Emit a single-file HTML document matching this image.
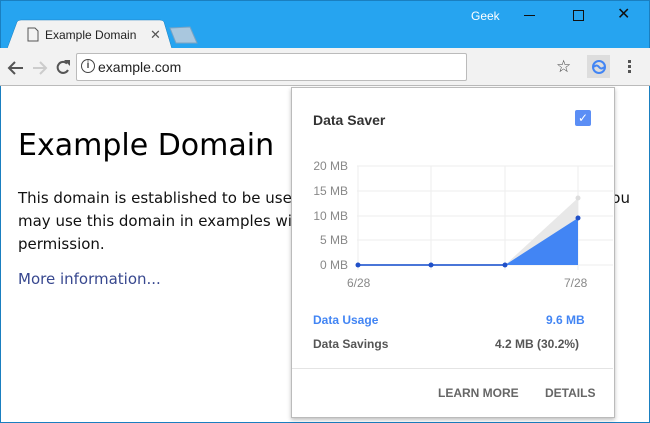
<!DOCTYPE html><html><head><style>
body{margin:0;width:650px;height:423px;overflow:hidden;font-family:"Liberation Sans",sans-serif;background:#26a4f0;position:relative}
.a{position:absolute}
</style></head><body>
<div class="a" style="left:0;top:0;width:648px;height:421px;border:1px solid #1a7fc0"></div>
<div class="a" style="left:471px;top:9px;font-size:12px;color:#fff">Geek</div>
<div class="a" style="left:524px;top:15px;width:11px;height:1px;background:#111"></div>
<div class="a" style="left:573px;top:10px;width:9px;height:9px;border:1px solid #111"></div>
<div class="a" style="left:617px;top:4px;font-size:16px;color:#111">✕</div>
<svg class="a" style="left:0;top:18px" width="200" height="32"><path d="M7 31 L17 4 Q18 2 21 2 L160 2 Q163 2 164 4 L172 31Z" fill="#f2f2f2" stroke="#1a7fc0" stroke-width="0.5"/><path d="M170 10 L190 9 L197 25 L176 25Z" fill="#a9c7de" stroke="#7aa3c3"/><path d="M28 10h7l3 3v10h-10z" fill="none" stroke="#555"/></svg>
<div class="a" style="left:45px;top:28px;font-size:12px;color:#222">Example Domain</div>
<div class="a" style="left:150px;top:27px;font-size:13px;color:#555">✕</div>
<div class="a" style="left:0;top:48px;width:650px;height:37px;background:#f2f2f2;border-bottom:1px solid #bbb"></div>
<svg class="a" style="left:0;top:58px" width="76" height="20"><path d="M23 10H10M15 4L9 10l6 6" stroke="#555" stroke-width="2" fill="none"/><path d="M33 10h12M40 4l6 6-6 6" stroke="#ccc" stroke-width="2" fill="none"/><path d="M67 5.5A5.5 5.5 0 1 0 68 12" stroke="#555" stroke-width="2" fill="none"/><path d="M64 2h6v6z" fill="#555"/></svg>
<div class="a" style="left:76px;top:53px;width:389px;height:26px;background:#fff;border:1px solid #bbb;border-radius:2px"></div>
<div class="a" style="left:81px;top:59px;width:12px;height:12px;border:1.5px solid #444;border-radius:50%;font-size:10px;text-align:center;line-height:12px;font-weight:bold;color:#444">i</div>
<div class="a" style="left:98px;top:59px;font-size:14px;color:#222">example.com</div>
<div class="a" style="left:556px;top:57px;font-size:17px;color:#444">☆</div>
<div class="a" style="left:587px;top:55px;width:23px;height:23px;background:#ddd"></div>
<svg class="a" style="left:591px;top:59px" width="16" height="16"><circle cx="8" cy="8" r="6" fill="none" stroke="#4285f4" stroke-width="2"/><path d="M3 8q2.5-3 5 0t5 0" fill="none" stroke="#4285f4" stroke-width="2"/></svg>
<div class="a" style="left:628px;top:60px;width:3px;height:3px;background:#555;box-shadow:0 5px #555,0 10px #555"></div>
<div class="a" style="left:1px;top:86px;width:648px;height:336px;background:#fff"></div>
<div class="a" style="left:18px;top:128px;font-size:30px;color:#000;font-family:'DejaVu Sans',sans-serif;white-space:nowrap">Example Domain</div>
<div class="a" style="left:18px;top:187px;font-size:15px;line-height:23px;color:#111;font-family:'DejaVu Sans',sans-serif;white-space:nowrap">This domain is established to be used for illustrative examples in documents. You<br>may use this domain in examples without prior coordination or asking for<br>permission.</div>
<div class="a" style="left:18px;top:270px;font-size:15px;color:#38488f;font-family:'DejaVu Sans',sans-serif">More information...</div>
<div class="a" style="left:291px;top:87px;width:322px;height:329px;background:#fff;border:1px solid #bbb;box-shadow:0 2px 4px rgba(0,0,0,.25)"></div>
<div class="a" style="left:313px;top:112px;font-size:14px;color:#333;font-weight:bold">Data Saver</div>
<div class="a" style="left:575px;top:110px;width:16px;height:16px;background:#5b8ef5;border-radius:2px;color:#fff;font-size:12px;text-align:center;line-height:16px">✓</div>
<svg class="a" style="left:291px;top:150px" width="322" height="140" font-family="Liberation Sans" font-size="12" fill="#888">
<g stroke="#eee"><path d="M66 16H592M66 41H592M66 66H592M66 90H592M66 115H592M67 16V120M140 16V120M214 16V120M287 16V120"/></g>
<g text-anchor="end"><text x="57" y="20">20 MB</text><text x="57" y="45">15 MB</text><text x="57" y="70">10 MB</text><text x="57" y="94">5 MB</text><text x="57" y="119">0 MB</text></g>
<path d="M214 115L287 48V115Z" fill="#e8e8e8"/><path d="M214 115L287 68V115Z" fill="#4285f4"/>
<path d="M67 115H214" stroke="#4a76d8" stroke-width="2"/>
<g fill="#2050c8"><circle cx="67" cy="115" r="2.5"/><circle cx="140" cy="115" r="2.5"/><circle cx="214" cy="115" r="2.5"/><circle cx="287" cy="68" r="2.5"/></g><circle cx="287" cy="48" r="2.5" fill="#ddd"/>
<text x="56" y="137">6/28</text><text x="273" y="137">7/28</text></svg>
<div class="a" style="left:313px;top:313px;font-size:12px;color:#4285f4;font-weight:bold">Data Usage</div>
<div class="a" style="left:546px;top:313px;font-size:12px;color:#4285f4;font-weight:bold">9.6 MB</div>
<div class="a" style="left:313px;top:337px;font-size:12px;color:#555;font-weight:bold">Data Savings</div>
<div class="a" style="left:495px;top:337px;font-size:12px;color:#555;font-weight:bold">4.2 MB (30.2%)</div>
<div class="a" style="left:292px;top:368px;width:321px;height:1px;background:#e4e4e4"></div>
<div class="a" style="left:438px;top:386px;font-size:12px;color:#666;font-weight:bold">LEARN MORE</div>
<div class="a" style="left:545px;top:386px;font-size:12px;color:#666;font-weight:bold">DETAILS</div>
</body></html>
